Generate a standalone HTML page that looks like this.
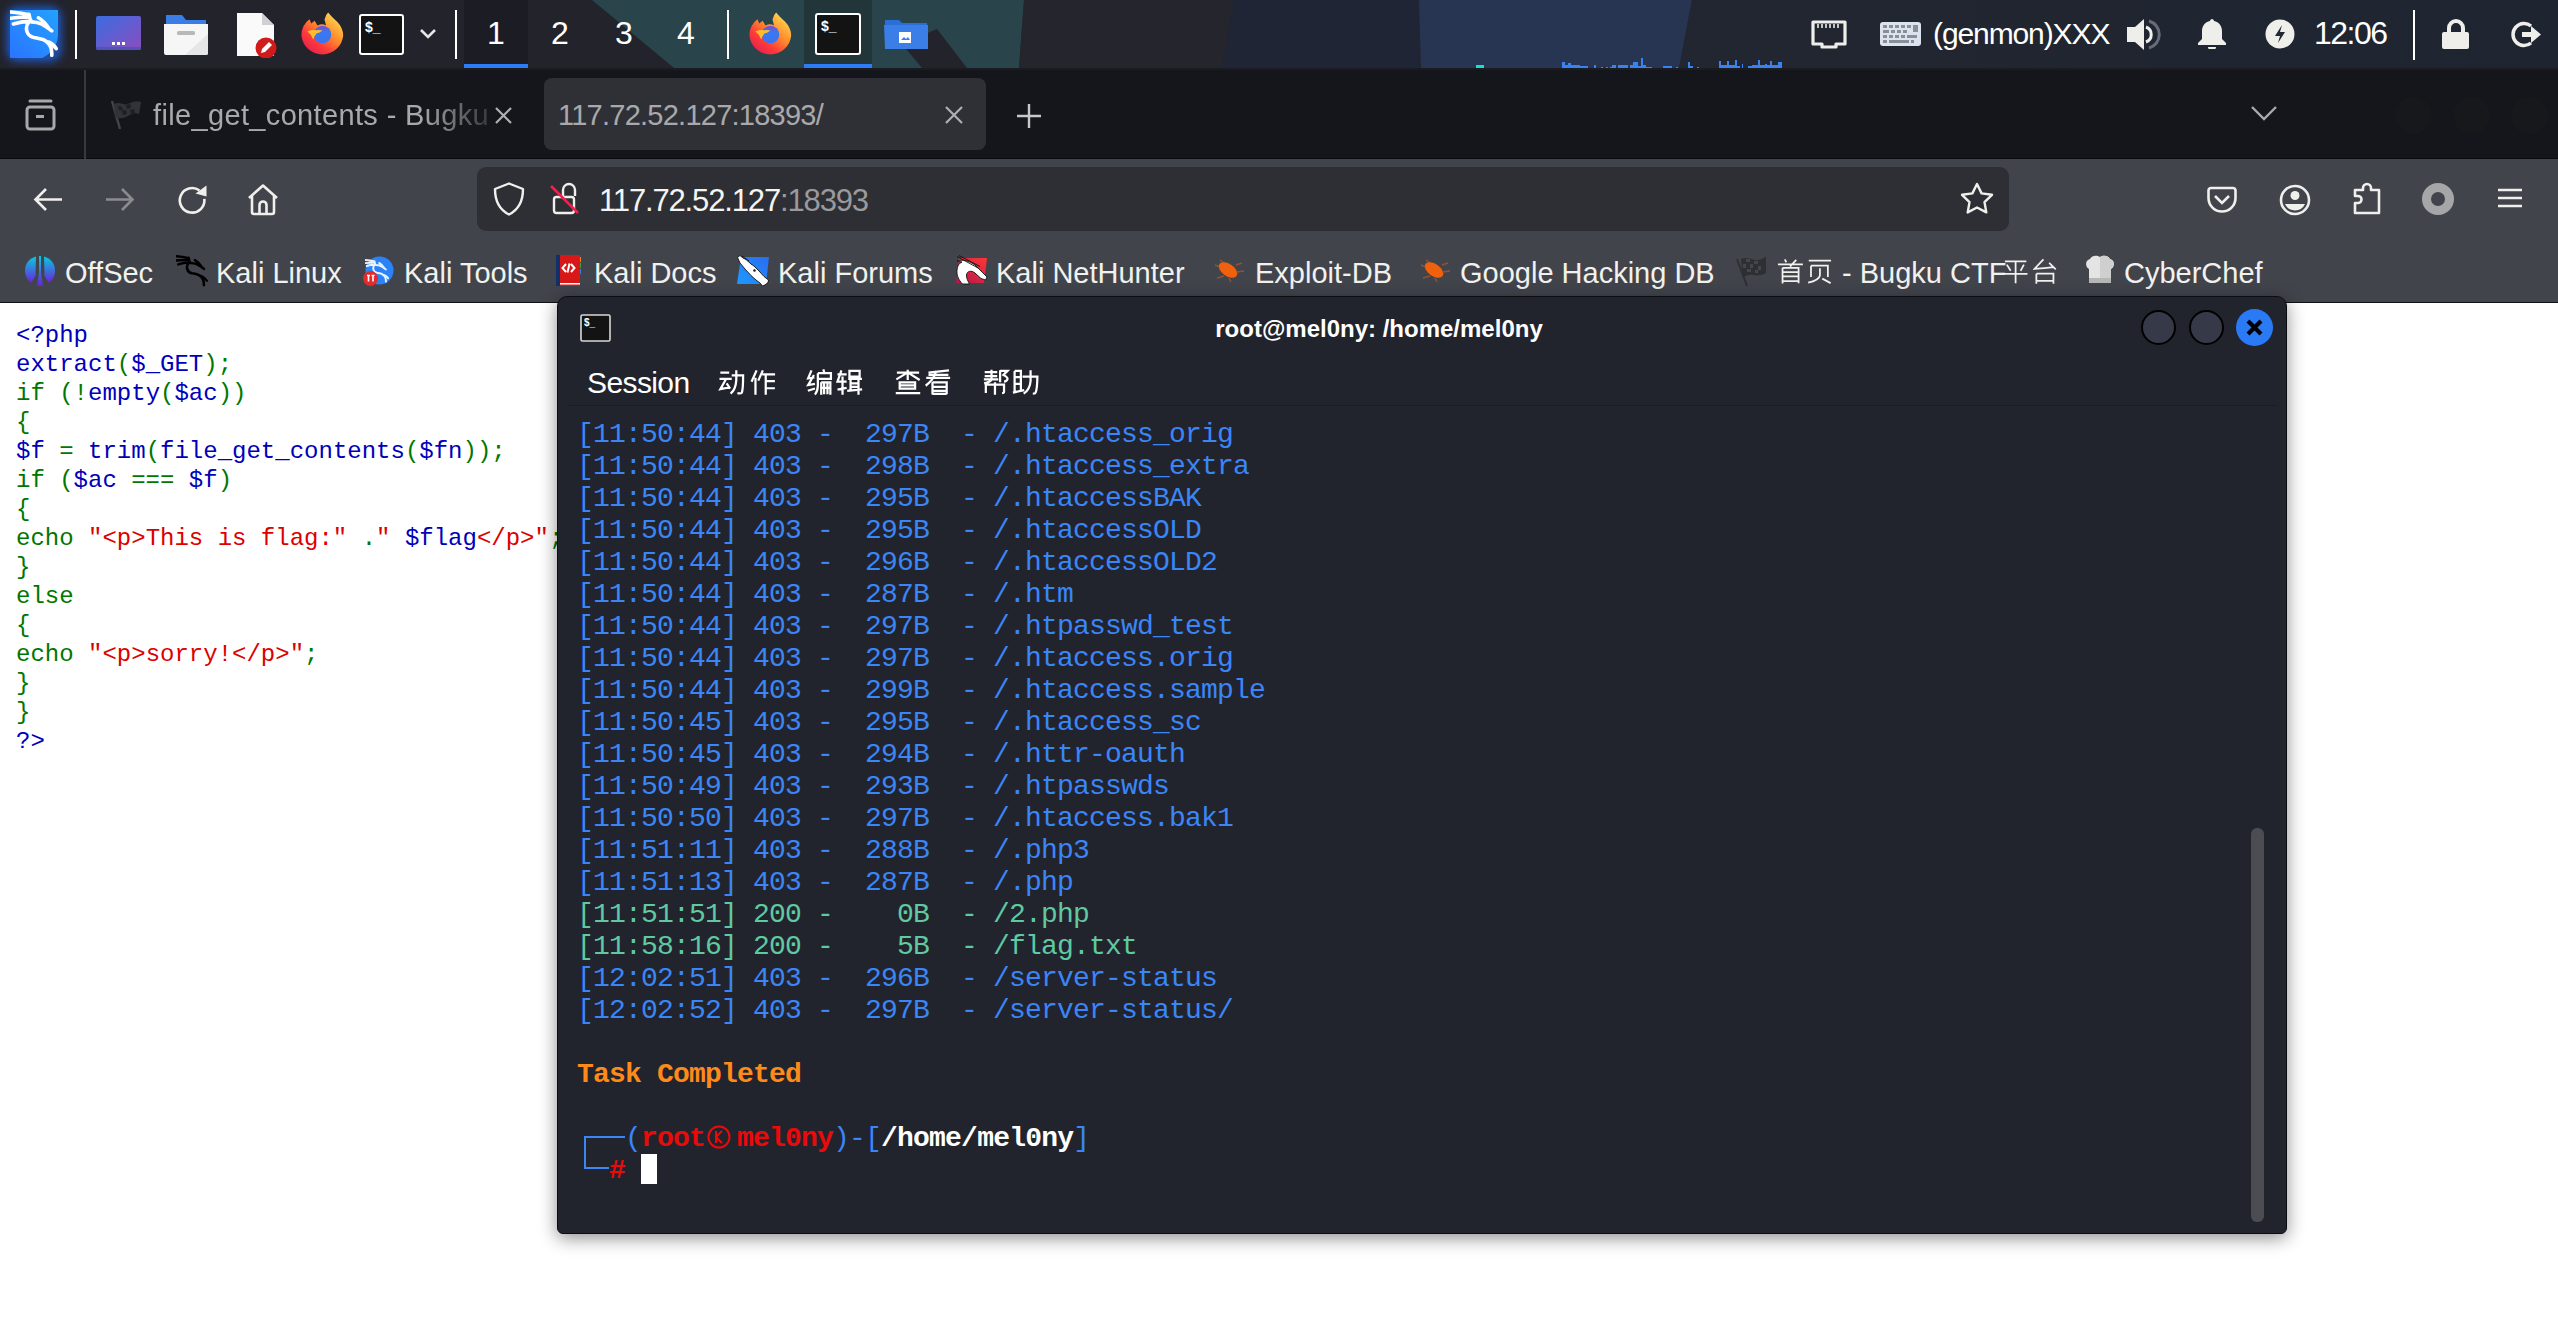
<!DOCTYPE html>
<html><head><meta charset="utf-8">
<style>
*{margin:0;padding:0;box-sizing:border-box}
html,body{width:2558px;height:1344px;overflow:hidden;background:#fff;font-family:"Liberation Sans",sans-serif}
.abs{position:absolute}
#panel{position:absolute;left:0;top:0;width:2558px;height:68px;background:#23242c;overflow:hidden}
#tabs{position:absolute;left:0;top:68px;width:2558px;height:91px;background:#15161b;border-top:2px solid #1b1c21;border-bottom:1px solid #0b0b0e}
#nav{position:absolute;left:0;top:159px;width:2558px;height:144px;background:#42444c;border-bottom:1px solid #101114}
#page{position:absolute;left:0;top:303px;width:2558px;height:1041px;background:#fff}
.php{position:absolute;left:16px;top:18px;font-family:"Liberation Mono",monospace;font-size:24px;line-height:29px;white-space:pre;color:#007700}
.g{color:#007700}.b{color:#0000BB}.r{color:#DD0000}
#term{position:absolute;left:557px;top:296px;width:1730px;height:938px;background:#22242d;border:1px solid #0c0d10;border-radius:10px 10px 6px 6px;box-shadow:0 4px 18px rgba(0,0,0,.45)}
.tl{position:absolute;left:19px;font-family:"Liberation Mono",monospace;font-size:28px;letter-spacing:-0.8px;line-height:32px;white-space:pre;color:#3b86f7}
.gr{color:#5fc9a2}.or{color:#fe8a19}.rd{color:#ea0a0a}.wh{color:#fff}.bl{color:#3b86f7}
.ui{font-family:"Liberation Sans",sans-serif}
.bm{top:94px;font-size:29px;line-height:40px;color:#f1f1ee;white-space:pre}
</style></head><body>
<svg width="0" height="0" style="position:absolute"><defs><symbol id="c-shou" viewBox="-1 -1 30 30"><path d="M8.4 1.6L10.1 4.6M20.7 2L14 9.3M1.1 6.8H27.8M6 10.6H23.2V27M6 10.6V27.4M6 15.3H23.2M6 19.8H23.2M6 24.8H23.2" fill="none" stroke="currentColor"/></symbol><symbol id="c-ye" viewBox="-1 -1 30 30"><path d="M3.1 2.9H26.9M5.4 8.3H23.5V20.5M5.4 8.3V20.5M15 11V18.8Q14 24 2.4 26.5M17.5 22.2L26.5 27" fill="none" stroke="currentColor"/></symbol><symbol id="c-ping" viewBox="-1 -1 30 30"><path d="M1 3.7H24M3.1 7.2L7.2 13.8M21.4 7.2L17.8 13.8M-0.5 17.1H25.2M12.5 3.7V27" fill="none" stroke="currentColor"/></symbol><symbol id="c-tai" viewBox="-1 -1 30 30"><path d="M10.2 1.6L0.5 11.8Q11 11 21.4 9.8M16.3 5.2L23.4 12.3M2.6 16.9H20.9V27.6M2.6 16.9V27.6M2.6 24.5H20.9" fill="none" stroke="currentColor"/></symbol><symbol id="c-dong" viewBox="-1 -1 30 30"><path d="M1.5 3.9H11M0.6 10.6H13.7M7.5 11L1.5 21.6L12 19.6M8.2 15.5L12 21M13.7 7H25.9Q25.9 22 24.5 25.5Q23.5 26.5 19.8 25.9M18.6 1.5V12Q18 22 12.5 26.5" fill="none" stroke="currentColor"/></symbol><symbol id="c-zuo" viewBox="-1 -1 30 30"><path d="M8.2 1.5L2.8 13.7M7 9.4V27.7M14.9 1.5L10 12.5M14.3 5.8H28M18 5.8V27.7M18 13.1H27.8M18 20.7H27.8" fill="none" stroke="currentColor"/></symbol><symbol id="c-bian" viewBox="-1 -1 30 30"><path d="M4.9 1.5L1.3 10L8 9M7.5 6.5L1.3 17.3L8.6 16M1 23.4L8.6 21M17.5 0.5L18.5 3.5M11.7 4.5H25.7V10.6H11.7M11.7 4.5V18Q11.5 24 8.6 27.5M15.3 14.3H25.1V27.7M15.3 14.3V27.7M18.4 14.3V27M22 14.3V27M15.3 20.4H25.1" fill="none" stroke="currentColor"/></symbol><symbol id="c-ji" viewBox="-1 -1 30 30"><path d="M0.6 5.8H10.4M4.8 1.5L0.6 13.7H10.4M6 8.2V27.7M0.6 22.2L10.4 20.4M13.4 2.1H24.3V8.2H13.4ZM12.1 10.6H26.8M14.6 10.6V24M23.1 10.6V27.7M14.6 15.5H23.1M14.6 19.2H23.1M11 23.5L27 21.8" fill="none" stroke="currentColor"/></symbol><symbol id="c-cha" viewBox="-1 -1 30 30"><path d="M2.1 3.9H25.9M13.7 0.9V11.9M12.5 4.5L1.5 11.2M14.9 4.5L26.5 11.9M5.1 14.3H21.6V21H5.1ZM5.1 17.6H21.6M0.9 25.9H27.1" fill="none" stroke="currentColor"/></symbol><symbol id="c-kan" viewBox="-1 -1 30 30"><path d="M25.8 1.5L3.8 3.9M3.8 6.4H25.1M1.4 9.7H27M12.3 2.1Q9 12 0.8 18M8.1 14.3H23.3V27.1M8.1 14.3V27.5M8.1 19.2H23.3M8.1 23.4H23.3M8.1 26.8H23.3" fill="none" stroke="currentColor"/></symbol><symbol id="c-bang" viewBox="-1 -1 30 30"><path d="M1.9 3.3H15.3M1.9 7.6H15.3M1 11.2H16.5M9.2 0.9V11.2Q8.5 14 1.3 15.5M18.4 1.5V14.3M18.4 2.1H26.3L22 6.4Q27 9 26.3 11Q25.5 13.5 22.6 13.7M3.1 16.7H22.6V24.5Q22.6 25.9 20.5 25.9M3.1 16.7V25.9M12.9 14.3V27.7" fill="none" stroke="currentColor"/></symbol><symbol id="c-zhu" viewBox="-1 -1 30 30"><path d="M1.8 2.1H8.5V23.5M1.8 2.1V24M1.8 8.8H8.5M1.8 16.1H8.5M0 25.3L12.1 22.8M10.3 8.2H26.2Q26 22 24.3 25.3Q23.5 26.5 21.3 26.5M18.9 1.5V13Q18.2 22 11.5 26.5" fill="none" stroke="currentColor"/></symbol>
<linearGradient id="osg" x1="0" y1="0" x2="0" y2="1"><stop offset="0" stop-color="#08c8e0"/><stop offset="1" stop-color="#6a22d8"/></linearGradient>
<linearGradient id="kfg" x1="0" y1="1" x2="1" y2="0"><stop offset="0" stop-color="#1e9bff"/><stop offset="1" stop-color="#2a6cf0"/></linearGradient>
<linearGradient id="nhg" x1="0" y1="1" x2="1" y2="0"><stop offset="0" stop-color="#b01850"/><stop offset="1" stop-color="#ff3535"/></linearGradient>
<symbol id="dragon" viewBox="0 0 48 48"><path d="M0.7 2Q10 2.5 19 4.7M0.7 8.3Q10 7 19 7M3.4 14Q11 11.5 19 11.4M19 4.3Q19.5 9 21.7 11.9Q27 12 31.9 14.1Q37 17 41.8 20.8M28.4 7.8Q34 11 38.6 18M19 11.9Q15.5 16 16.8 20.8Q18 26 24 27.5Q29 28.3 33 29.5Q39 32 41 38Q42 42 41.8 45.3M38.6 32Q44 34.5 46.2 38.6" fill="none" stroke="currentColor" stroke-width="3.8" stroke-linecap="round"/></symbol>
<symbol id="bug" viewBox="0 0 32 26"><g filter="url(#blr)"><ellipse cx="15" cy="13" rx="10.5" ry="6" transform="rotate(35 15 13)" fill="#f0600f"/><path d="M7 3L11 6M2 8L7 10M24 15L31 14M4 21L11 19M16 21L18 25M23 8L29 6" stroke="#e8661a" stroke-width="1.5" opacity=".45"/></g></symbol><filter id="blr" x="-20%" y="-20%" width="140%" height="140%"><feGaussianBlur stdDeviation="0.55"/></filter>
</defs></svg>
<div id="panel">
<svg class="abs" style="left:0;top:0" width="2558" height="68" viewBox="0 0 2558 68">
<defs>
<linearGradient id="rg" x1="0" x2="1" y1="0" y2="0"><stop offset="0" stop-color="#222630"/><stop offset="1" stop-color="#1e2531"/></linearGradient>
<linearGradient id="pg" x1="0" y1="0" x2="1" y2="1"><stop offset="0" stop-color="#3a6de0"/><stop offset="1" stop-color="#8a4dbf"/></linearGradient>
<linearGradient id="ffo" x1="0.15" y1="0.95" x2="0.85" y2="0.1"><stop offset="0" stop-color="#e0204f"/><stop offset="0.3" stop-color="#ff3a3a"/><stop offset="0.6" stop-color="#ff8a2a"/><stop offset="1" stop-color="#ffd54e"/></linearGradient><linearGradient id="ffb" x1="0" y1="0" x2="0" y2="1"><stop offset="0" stop-color="#7a4ad0"/><stop offset="0.35" stop-color="#3a78f2"/><stop offset="1" stop-color="#3a74ee"/></linearGradient>
</defs>
<rect width="2558" height="68" fill="#23232b"/>
<polygon points="592,0 1024,0 1019,68 674,68" fill="#29444a"/>
<polygon points="937,29 967,68 922,68 902,44" fill="#23232b"/>
<polygon points="1024,0 1234,0 1222,68 1019,68" fill="#25252e"/>
<polygon points="1234,0 1419,0 1421,68 1222,68" fill="#1f2535"/>
<polygon points="1419,0 1692,0 1679,68 1421,68" fill="#283552"/>
<polygon points="1692,0 2558,0 2558,68 1679,68" fill="url(#rg)"/>
<rect x="464" y="0" width="64" height="68" fill="#1c1d24"/>
<rect x="464" y="64" width="64" height="4" fill="#2e7bf6"/>
<rect x="804" y="0" width="68" height="68" fill="#223538"/>
<rect x="804" y="64" width="68" height="4" fill="#2e7bf6"/>
<rect x="1476" y="65" width="8" height="3" fill="#17e0d0"/>
<g fill="#3a82f2"><rect x="1562" y="62" width="3" height="6"/><rect x="1565" y="65" width="3" height="3"/><rect x="1568" y="63" width="3" height="5"/><rect x="1571" y="65" width="9" height="3"/><rect x="1580" y="66" width="8" height="2"/><rect x="1594" y="65" width="2" height="3"/><rect x="1601" y="67" width="2" height="1"/><rect x="1606" y="67" width="2" height="1"/><rect x="1610" y="67" width="2" height="1"/><rect x="1612" y="65" width="4" height="3"/><rect x="1618" y="65" width="10" height="3"/><rect x="1630" y="65" width="3" height="3"/><rect x="1633" y="62" width="5" height="6"/><rect x="1638" y="66" width="3" height="2"/><rect x="1641" y="58" width="2" height="10"/><rect x="1643" y="65" width="3" height="3"/><rect x="1646" y="67" width="4" height="1"/><rect x="1650" y="67" width="2" height="1"/><rect x="1663" y="66" width="9" height="2"/><rect x="1676" y="67" width="2" height="1"/><rect x="1688" y="62" width="2" height="6"/><rect x="1690" y="66" width="3" height="2"/><rect x="1697" y="67" width="2" height="1"/><rect x="1719" y="61" width="2" height="7"/><rect x="1721" y="65" width="6" height="3"/><rect x="1727" y="61" width="2" height="7"/><rect x="1729" y="65" width="6" height="3"/><rect x="1735" y="60" width="2" height="8"/><rect x="1737" y="66" width="3" height="2"/><rect x="1742" y="64" width="1" height="4"/><rect x="1748" y="66" width="4" height="2"/><rect x="1752" y="65" width="6" height="3"/><rect x="1758" y="60" width="2" height="8"/><rect x="1760" y="65" width="5" height="3"/><rect x="1765" y="64" width="2" height="4"/><rect x="1767" y="65" width="3" height="3"/><rect x="1770" y="61" width="2" height="7"/><rect x="1772" y="65" width="6" height="3"/><rect x="1778" y="62" width="4" height="6"/></g>
</svg>
<!-- kali menu icon -->
<div class="abs" style="left:11px;top:11px;width:46px;height:46px;border-radius:6px;background:rgba(30,110,255,.55);box-shadow:0 0 9px 4px rgba(30,110,255,.75)"></div>
<svg class="abs" style="left:10px;top:10px" width="48" height="48" viewBox="0 0 48 48"><defs><linearGradient id="kg" x1="0" y1="1" x2="1" y2="0"><stop offset="0" stop-color="#2a74ff"/><stop offset="1" stop-color="#22a2ff"/></linearGradient></defs>
<path d="M0 0H48V26Q46 42 32 48H0Z" fill="url(#kg)"/>
<path d="M0.7 2Q10 2.5 19 4.7M0.7 8.3Q10 7 19 7M3.4 14Q11 11.5 19 11.4M19 4.3Q19.5 9 21.7 11.9Q27 12 31.9 14.1Q37 17 41.8 20.8M28.4 7.8Q34 11 38.6 18M19 11.9Q15.5 16 16.8 20.8Q18 26 24 27.5Q29 28.3 33 29.5Q39 32 41 38Q42 42 41.8 45.3M38.6 32Q44 34.5 46.2 38.6" stroke="#fff" stroke-width="3.6" fill="none" stroke-linecap="round"/></svg>
<div class="abs" style="left:75px;top:10px;width:2px;height:49px;background:#fff"></div>
<svg class="abs" style="left:96px;top:16px" width="45" height="35" viewBox="0 0 45 35"><rect width="45" height="34" rx="2" fill="url(#pg)"/><rect y="31" width="45" height="3" fill="#3d4fb5" opacity=".6"/><rect x="16" y="26" width="3" height="3" fill="#fff"/><rect x="21" y="26" width="3" height="3" fill="#fff"/><rect x="26" y="26" width="3" height="3" fill="#fff"/></svg>
<svg class="abs" style="left:163px;top:14px" width="46" height="41" viewBox="0 0 46 41"><path d="M3 1h16l4 5h20v8H3z" fill="#3b7de6"/><path d="M1 10h44v29a2 2 0 0 1-2 2H3a2 2 0 0 1-2-2z" fill="#f6f6f6"/><path d="M45 20V39a2 2 0 0 1-2 2H22z" fill="#e6e6e6"/><rect x="14" y="17" width="18" height="4" rx="1.5" fill="#b8b8b8"/></svg>
<svg class="abs" style="left:236px;top:12px" width="44" height="46" viewBox="0 0 44 46"><path d="M1 1h25l12 12v31H1z" fill="#fafafa"/><path d="M26 1v12h12z" fill="#d0d0d0"/><circle cx="30" cy="36" r="10.5" fill="#d11a1a"/><path d="M25 41l1-4 7-7 3 3-7 7z" fill="#fff"/></svg>
<svg class="abs" style="left:300px;top:12px" width="44" height="44" viewBox="0 0 44 44"><path d="M9.5 7.2L11.2 11.5L14.6 8.8L17.5 13.5Q22 11 26 13.5L24.5 7.5Q25.5 3 28.1 0.6Q31.5 5 37.4 9.9Q43.2 16 43.2 23.5A21 21 0 0 1 1.4 23.5Q1.4 13 9.5 7.2Z" fill="url(#ffo)"/><circle cx="22.5" cy="22.5" r="8.8" fill="url(#ffb)"/><path d="M7.3 19.3Q12 17.3 16.5 18.2Q20 17.8 22.5 18.6Q19.5 21 16.5 21.6Q14.2 24 13.2 27.5Q11.5 22.5 7.3 19.3Z" fill="#ffbd2e"/></svg>
<svg class="abs" style="left:359px;top:14px" width="45" height="41" viewBox="0 0 45 41"><rect x="1" y="1" width="43" height="39" rx="2" fill="#131313" stroke="#fff" stroke-width="2"/><text x="6" y="18" font-family="Liberation Sans" font-weight="bold" font-size="14" fill="#fff">$_</text></svg>
<svg class="abs" style="left:419px;top:28px" width="18" height="12" viewBox="0 0 18 12"><path d="M2 2l7 7 7-7" stroke="#e6e6e6" stroke-width="2.6" fill="none"/></svg>
<div class="abs" style="left:455px;top:10px;width:2px;height:49px;background:#fff"></div>
<div class="abs ui" style="left:464px;top:13px;width:64px;text-align:center;font-size:32px;line-height:40px;color:#fff">1</div>
<div class="abs ui" style="left:528px;top:13px;width:64px;text-align:center;font-size:32px;line-height:40px;color:#fff">2</div>
<div class="abs ui" style="left:592px;top:13px;width:64px;text-align:center;font-size:32px;line-height:40px;color:#fff">3</div>
<div class="abs ui" style="left:654px;top:13px;width:64px;text-align:center;font-size:32px;line-height:40px;color:#fff">4</div>
<div class="abs" style="left:727px;top:10px;width:2px;height:49px;background:#fff"></div>
<svg class="abs" style="left:748px;top:12px" width="44" height="44" viewBox="0 0 44 44"><path d="M9.5 7.2L11.2 11.5L14.6 8.8L17.5 13.5Q22 11 26 13.5L24.5 7.5Q25.5 3 28.1 0.6Q31.5 5 37.4 9.9Q43.2 16 43.2 23.5A21 21 0 0 1 1.4 23.5Q1.4 13 9.5 7.2Z" fill="url(#ffo)"/><circle cx="22.5" cy="22.5" r="8.8" fill="url(#ffb)"/><path d="M7.3 19.3Q12 17.3 16.5 18.2Q20 17.8 22.5 18.6Q19.5 21 16.5 21.6Q14.2 24 13.2 27.5Q11.5 22.5 7.3 19.3Z" fill="#ffbd2e"/></svg>
<svg class="abs" style="left:815px;top:13px" width="46" height="42" viewBox="0 0 46 42"><rect x="1" y="1" width="44" height="40" rx="2" fill="#131313" stroke="#fff" stroke-width="2"/><text x="6" y="18" font-family="Liberation Sans" font-weight="bold" font-size="14" fill="#fff">$_</text></svg>
<svg class="abs" style="left:884px;top:18px" width="44" height="32" viewBox="0 0 44 32"><path d="M1 2h14l3 3h25v6H1z" fill="#2a6fd8"/><path d="M0 7h44v24H1z" fill="#3b7ee8"/><rect x="15" y="14" width="12" height="11" fill="#fff"/><path d="M17 22l3-3 2 2 2-2 2 3z" fill="#3b7ee8"/></svg>
<svg class="abs" style="left:1811px;top:20px" width="36" height="29" viewBox="0 0 36 29"><path d="M2 2h32v22H25v3H11v-3H2z" stroke="#eeeeea" stroke-width="3.2" fill="none" stroke-linejoin="round"/><path d="M7 4v4M11 4v4M15 4v4M19 4v4M23 4v4M27 4v4" stroke="#eeeeea" stroke-width="1.6"/></svg>
<svg class="abs" style="left:1880px;top:22px" width="41" height="24" viewBox="0 0 41 24"><rect width="41" height="24" rx="3" fill="#dde3ee"/><g fill="#8a8e96"><rect x="3" y="3" width="4" height="3"/><rect x="9" y="3" width="4" height="3"/><rect x="15" y="3" width="4" height="3"/><rect x="21" y="3" width="4" height="3"/><rect x="27" y="3" width="4" height="3"/><rect x="33" y="3" width="5" height="7"/><rect x="3" y="8" width="6" height="3"/><rect x="11" y="8" width="4" height="3"/><rect x="17" y="8" width="4" height="3"/><rect x="23" y="8" width="4" height="3"/><rect x="3" y="13" width="4" height="3"/><rect x="9" y="13" width="4" height="3"/><rect x="15" y="13" width="4" height="3"/><rect x="21" y="13" width="4" height="3"/><rect x="27" y="13" width="10" height="3"/><rect x="3" y="18" width="4" height="3"/><rect x="9" y="18" width="20" height="3"/><rect x="31" y="18" width="3" height="3"/></g></svg>
<div class="abs ui" style="left:1933px;top:14px;font-size:30px;line-height:40px;color:#fff;white-space:pre;letter-spacing:-1.1px">(genmon)XXX</div>
<svg class="abs" style="left:2126px;top:18px" width="35" height="33" viewBox="0 0 35 33"><path d="M1 9h8l9-8v31l-9-8H1z" fill="#eeeeea"/><path d="M20 9a8 8 0 0 1 0 15" stroke="#eeeeea" stroke-width="3" fill="none"/><path d="M23 3a14 14 0 0 1 0 27" stroke="#666c75" stroke-width="3" fill="none"/></svg>
<svg class="abs" style="left:2197px;top:18px" width="30" height="31" viewBox="0 0 30 31"><path d="M15 1c1 0 2 1 2 2 5 1 8 5 8 10v8l4 4v2H1v-2l4-4v-8c0-5 3-9 8-10 0-1 1-2 2-2z" fill="#eeeeea"/><path d="M11 29h8a4 3 0 0 1-8 0z" fill="#eeeeea"/></svg>
<svg class="abs" style="left:2265px;top:19px" width="30" height="30" viewBox="0 0 30 30"><circle cx="15" cy="15" r="14.5" fill="#eeeeea"/><path d="M17 6l-7 11h5l-2 7 7-11h-5z" fill="#222732"/></svg>
<div class="abs ui" style="left:2314px;top:13px;font-size:32px;line-height:40px;color:#fff;white-space:pre;letter-spacing:-1.5px">12:06</div>
<div class="abs" style="left:2413px;top:10px;width:2px;height:50px;background:#fff"></div>
<svg class="abs" style="left:2442px;top:19px" width="28" height="30" viewBox="0 0 28 30"><path d="M7 13V9a7 7 0 0 1 14 0v4" stroke="#eeeeea" stroke-width="4" fill="none"/><rect x="0" y="13" width="27" height="17" rx="2" fill="#eeeeea"/></svg>
<svg class="abs" style="left:2511px;top:21px" width="31" height="27" viewBox="0 0 31 27"><path d="M20 5A11 11 0 1 0 20 22" stroke="#eeeeea" stroke-width="3.5" fill="none"/><path d="M11 11h9V5l10 8.5-10 8.5v-6h-9z" fill="#eeeeea"/></svg>
</div>
<div id="tabs">
<svg class="abs" style="left:24px;top:28px" width="33" height="34" viewBox="0 0 33 34"><path d="M6 3h21M3 12a3 3 0 0 1 3-3h21a3 3 0 0 1 3 3v16a3 3 0 0 1-3 3H6a3 3 0 0 1-3-3z" stroke="#a8a8ab" stroke-width="3" fill="none" stroke-linecap="round"/><rect x="12" y="17" width="8" height="3" fill="#a8a8ab"/></svg>
<div class="abs" style="left:84px;top:0;width:2px;height:90px;background:#38393e"></div>
<svg class="abs" style="left:110px;top:28px" width="34" height="34" viewBox="0 0 34 34" opacity=".55"><path d="M2 3l8 28" stroke="#6a6a70" stroke-width="2.4"/><path d="M4 6c6-3 10 2 14 0s8-4 13-2l-2 12c-5-2-9 1-13 3s-8 0-11 2z" fill="#4a4a50"/><path d="M8 8l4 1 1 4-4-1zM16 7l4-1 1 4-4 1zM12 13l4-1 1 4-4 1zM20 12l4-1 1 4-4 1z" fill="#26262b"/></svg>
<div class="abs ui" style="left:153px;top:20px;width:335px;overflow:hidden;font-size:29px;line-height:50px;color:#a9a9ac;white-space:pre;letter-spacing:0.35px;-webkit-mask-image:linear-gradient(90deg,#000 80%,rgba(0,0,0,.25) 100%)">file_get_contents - Bugku</div>
<svg class="abs" style="left:495px;top:37px" width="17" height="17" viewBox="0 0 17 17"><path d="M1 1l15 15M16 1L1 16" stroke="#b0b0b3" stroke-width="2.2"/></svg>
<div class="abs" style="left:544px;top:8px;width:442px;height:72px;border-radius:8px;background:#2f3036"></div>
<div class="abs ui" style="left:558px;top:20px;font-size:29px;line-height:50px;color:#a9a9ac;white-space:pre;letter-spacing:-0.75px">117.72.52.127:18393/</div>
<svg class="abs" style="left:945px;top:36px" width="18" height="18" viewBox="0 0 18 18"><path d="M1 1l16 16M17 1L1 17" stroke="#b0b0b3" stroke-width="2.2"/></svg>
<svg class="abs" style="left:1016px;top:33px" width="26" height="26" viewBox="0 0 26 26"><path d="M13 1v24M1 13h24" stroke="#c8c8cb" stroke-width="2.4"/></svg>
<svg class="abs" style="left:2250px;top:35px" width="28" height="16" viewBox="0 0 28 16"><path d="M2 2l12 12L26 2" stroke="#a9a9ac" stroke-width="2.4" fill="none"/></svg>
<div class="abs" style="left:2395px;top:27px;width:37px;height:37px;border-radius:50%;background:#17181c"></div>
<div class="abs" style="left:2453px;top:27px;width:37px;height:37px;border-radius:50%;background:#17181c"></div>
<div class="abs" style="left:2511px;top:27px;width:37px;height:37px;border-radius:50%;background:#17181c"></div>
</div>
<div id="nav">
<svg class="abs" style="left:33px;top:28px" width="30" height="26" viewBox="0 0 30 26"><path d="M29 12.5H3M13 2L2.5 12.5 13 23" stroke="#efefec" stroke-width="2.6" fill="none"/></svg>
<svg class="abs" style="left:105px;top:28px" width="30" height="26" viewBox="0 0 30 26"><path d="M1 12.5h26M17 2l10.5 10.5L17 23" stroke="#8b8c90" stroke-width="2.6" fill="none"/></svg>
<svg class="abs" style="left:177px;top:25px" width="32" height="32" viewBox="0 0 32 32"><path d="M27.3 14.8A12.3 12.3 0 1 1 22.5 6.5" stroke="#efefec" stroke-width="2.6" fill="none"/><path d="M18.5 9.5L29.5 1.5V12.5Z" fill="#efefec"/></svg>
<svg class="abs" style="left:247px;top:25px" width="32" height="32" viewBox="0 0 32 32"><path d="M2 14L16 1.5 30 14M5 12v16a2 2 0 0 0 2 2h18a2 2 0 0 0 2-2V12M12.5 30v-9a3.5 3.5 0 0 1 7 0v9" stroke="#efefec" stroke-width="2.6" fill="none" stroke-linejoin="round"/></svg>
<div class="abs" style="left:477px;top:8px;width:1532px;height:64px;border-radius:9px;background:#2e2f34"></div>
<svg class="abs" style="left:493px;top:23px" width="32" height="34" viewBox="0 0 32 34"><path d="M16 1.5L30 7c0 13-5 21-14 25.5C7 28 2 20 2 7z" stroke="#efefec" stroke-width="2.4" fill="none" stroke-linejoin="round"/></svg>
<svg class="abs" style="left:550px;top:22px" width="32" height="35" viewBox="0 0 32 35"><path d="M13 15V9a6 6 0 0 1 12 0v6" stroke="#efefec" stroke-width="2.4" fill="none"/><rect x="4" y="16" width="20" height="16" rx="2.5" stroke="#efefec" stroke-width="2.4" fill="none"/><path d="M1 5l27 27" stroke="#ef1f4e" stroke-width="2.6"/></svg>
<div class="abs ui" style="left:599px;top:22px;font-size:31px;line-height:40px;color:#f4f4f2;white-space:pre;letter-spacing:-1.15px">117.72.52.127<span style="color:#9a9a9e">:18393</span></div>
<svg class="abs" style="left:1960px;top:23px" width="34" height="33" viewBox="0 0 34 33"><path d="M17 2l4.6 9.4 10.4 1.4-7.5 7.3 1.8 10.3L17 25.5l-9.3 4.9 1.8-10.3L2 12.8l10.4-1.4z" stroke="#efefec" stroke-width="2.4" fill="none" stroke-linejoin="round"/></svg>
<svg class="abs" style="left:2207px;top:27px" width="30" height="28" viewBox="0 0 30 28"><path d="M4 2h22a2.5 2.5 0 0 1 2.5 2.5V12A13.5 13.5 0 0 1 1.5 12V4.5A2.5 2.5 0 0 1 4 2z" stroke="#efefec" stroke-width="2.6" fill="none"/><path d="M8 10l7 7 7-7" stroke="#efefec" stroke-width="2.6" fill="none"/></svg>
<svg class="abs" style="left:2279px;top:25px" width="32" height="32" viewBox="0 0 32 32"><circle cx="16" cy="16" r="14" stroke="#efefec" stroke-width="2.6" fill="none"/><circle cx="16" cy="11.5" r="4.5" fill="#efefec"/><path d="M6 20h20a11 11 0 0 1-20 0z" fill="#efefec"/></svg>
<svg class="abs" style="left:2352px;top:23px" width="30" height="34" viewBox="0 0 30 34"><path d="M3 31V21h3a3.5 3.5 0 0 0 0-7H3V8h8V6a4 4 0 0 1 8 0v2h8v23z" stroke="#efefec" stroke-width="2.6" fill="none" stroke-linejoin="round"/></svg>
<svg class="abs" style="left:2421px;top:23px" width="34" height="34" viewBox="0 0 34 34"><circle cx="17" cy="17" r="11.5" stroke="#a6a6a8" stroke-width="9" fill="none"/></svg>
<svg class="abs" style="left:2497px;top:29px" width="26" height="20" viewBox="0 0 26 20"><path d="M1 2h24M1 10h24M1 18h24" stroke="#efefec" stroke-width="2.6"/></svg>

<svg class="abs" style="left:25px;top:97px" width="30" height="30" viewBox="0 0 30 30"><path d="M11 0.5C4 2.5 0 8 0 14.5C0 20 2.5 24 6 27L10.5 20Z" fill="url(#osg)"/><path d="M19 0.5C26 2.5 30 8 30 14.5C30 20 27.5 24 24 27L19.5 20Z" fill="url(#osg)"/><path d="M14 0H16V17L18 30H12L14 17Z" fill="url(#osg)"/></svg>
<svg class="abs" style="left:176px;top:96px;color:#000" width="32" height="32"><use href="#dragon"/></svg>
<svg class="abs" style="left:363px;top:97px" width="32" height="32" viewBox="0 0 32 32"><circle cx="16.5" cy="14.5" r="14" fill="#2a84f8"/><g style="color:#fff" opacity=".9"><use href="#dragon" x="2" y="3" width="24" height="24"/></g><circle cx="7.5" cy="22.5" r="7.5" fill="#e52a2a"/><path d="M4 19.5h3M5.5 19.5v6M8.5 19.5h3M10 19.5v6" stroke="#fff" stroke-width="1.6"/></svg>
<svg class="abs" style="left:556px;top:96px" width="25" height="32" viewBox="0 0 25 32"><rect x="0" y="0" width="24" height="31" fill="#d81818"/><rect x="0" y="0" width="4" height="31" fill="#11306a"/><rect x="4" y="28" width="20" height="1.5" fill="#fff"/><rect x="24" y="2" width="1" height="5" fill="#f08a18"/><rect x="24" y="8" width="1" height="5" fill="#3aaa3a"/><rect x="24" y="14" width="1" height="5" fill="#3a7af0"/><path d="M10 9L6.5 13L10 17M15 9L18.5 13L15 17M13.5 8.5L11.5 17.5" stroke="#fff" stroke-width="2" fill="none"/></svg>
<svg class="abs" style="left:737px;top:96px" width="32" height="32" viewBox="0 0 32 32"><path d="M4 2H32L29 29H0Z" fill="url(#kfg)"/><path d="M0.5 2.5L3 0.5L6 3L9 4.5L14 9L17 11L22 16L27 21.5L31.5 25L31 27.5L28 30L25.5 31L23 28L19 25L14 20.5L8 14L3 8Z" fill="#fff" stroke="#111" stroke-width="0.9" stroke-linejoin="round"/><path d="M5 1L12 6" stroke="#111" stroke-width="0.9"/><circle cx="17.5" cy="15.5" r="1.2" fill="#111"/></svg>
<svg class="abs" style="left:956px;top:96px" width="32" height="32" viewBox="0 0 32 32"><path d="M3 3H31L28 28H0Z" fill="url(#nhg)"/><path d="M1 6C7 4 13 6 19 10L26 17L31 22L29.5 25L25 23.5L19 18C15 15 11 16 10.5 20C10.2 23 12 26 13.5 29L6.5 29C2.5 25 0.5 20 1 15C1.3 11 3 8 6 7Z" fill="#fff" stroke="#111" stroke-width="0.9" stroke-linejoin="round"/><path d="M1 1.5L22 13M3 0.5L24 11.5" stroke="#111" stroke-width="0.9"/></svg>
<svg class="abs" style="left:1213px;top:98px" width="32" height="26"><use href="#bug"/></svg>
<svg class="abs" style="left:1419px;top:98px" width="32" height="26"><use href="#bug"/></svg>
<svg class="abs" style="left:1736px;top:96px" width="32" height="32" viewBox="0 0 32 32"><path d="M1 4L11 31" stroke="#2e2f33" stroke-width="2"/><path d="M5 4C12 1 17 6 22 5C26 4.5 28 2.5 30 1.5V18C26 20 22 21 17 20C12 19 9 21 7 23L5 4Z" fill="#2e2f33"/><g fill="#45464d"><rect x="10" y="4" width="4" height="3"/><rect x="18" y="6" width="4" height="3"/><rect x="7" y="9" width="3" height="4"/><rect x="14" y="9" width="3" height="4"/><rect x="22" y="11" width="3" height="4"/><rect x="11" y="14" width="4" height="3"/><rect x="19" y="15" width="3" height="3"/></g></svg>
<svg class="abs" style="left:2085px;top:96px" width="30" height="30" viewBox="0 0 30 30"><path d="M4 14C0 12 0 5 5 4C7 0 12 0 15 2C18 0 23 0 25 4C30 5 30 12 26 14V28H4Z" fill="#e4e4e4"/><path d="M15 2C18 0 23 0 25 4C30 5 30 12 26 14V28H15Z" fill="#cfcfcf"/><rect x="4" y="23" width="22" height="5" fill="#b6b6b6"/></svg>
<div class="abs ui bm" style="left:65px">OffSec</div>
<div class="abs ui bm" style="left:216px">Kali Linux</div>
<div class="abs ui bm" style="left:404px">Kali Tools</div>
<div class="abs ui bm" style="left:594px">Kali Docs</div>
<div class="abs ui bm" style="left:778px">Kali Forums</div>
<div class="abs ui bm" style="left:996px">Kali NetHunter</div>
<div class="abs ui bm" style="left:1255px">Exploit-DB</div>
<div class="abs ui bm" style="left:1460px">Google Hacking DB</div>
<svg class="abs" style="left:1776px;top:98px;color:#f1f1ee;stroke-width:1.9" width="28" height="28"><use href="#c-shou"/></svg><svg class="abs" style="left:1805px;top:98px;color:#f1f1ee;stroke-width:1.9" width="28" height="28"><use href="#c-ye"/></svg><div class="abs ui bm" style="left:1834px"> - Bugku CTF</div><svg class="abs" style="left:2003px;top:98px;color:#f1f1ee;stroke-width:1.9" width="28" height="28"><use href="#c-ping"/></svg><svg class="abs" style="left:2033px;top:98px;color:#f1f1ee;stroke-width:1.9" width="28" height="28"><use href="#c-tai"/></svg>
<div class="abs ui bm" style="left:2124px">CyberChef</div>
</div>
<div id="page">
<div class="php"><span class="b">&lt;?php
extract</span><span class="g">(</span><span class="b">$_GET</span><span class="g">);
if (!</span><span class="b">empty</span><span class="g">(</span><span class="b">$ac</span><span class="g">))
{
</span><span class="b">$f </span><span class="g">= </span><span class="b">trim</span><span class="g">(</span><span class="b">file_get_contents</span><span class="g">(</span><span class="b">$fn</span><span class="g">));
if (</span><span class="b">$ac </span><span class="g">=== </span><span class="b">$f</span><span class="g">)
{
echo </span><span class="r">"&lt;p&gt;This is flag:" </span><span class="g">.</span><span class="r">" </span><span class="b">$flag</span><span class="r">&lt;/p&gt;"</span><span class="g">;
}
else
{
echo </span><span class="r">"&lt;p&gt;sorry!&lt;/p&gt;"</span><span class="g">;
}
}
</span><span class="b">?&gt;</span></div>
</div>
<div id="term">
<svg class="abs" style="left:22px;top:17px" width="31" height="28" viewBox="0 0 31 28"><rect x="1" y="1" width="29" height="26" rx="1.5" fill="#131313" stroke="#d8d8d8" stroke-width="1.6"/><text x="4" y="12" font-family="Liberation Sans" font-weight="bold" font-size="10" fill="#fff">$_</text></svg>
<div class="abs ui" style="left:-44px;top:17px;width:1730px;text-align:center;font-size:24px;line-height:30px;font-weight:bold;color:#fff;white-space:pre">root@mel0ny: /home/mel0ny</div>
<div class="abs" style="left:1583px;top:13px;width:35px;height:35px;border-radius:50%;background:#363a48;border:2px solid #000"></div>
<div class="abs" style="left:1631px;top:13px;width:35px;height:35px;border-radius:50%;background:#363a48;border:2px solid #000"></div>
<div class="abs" style="left:1678px;top:12px;width:37px;height:37px;border-radius:50%;background:#2a7af5"></div>
<svg class="abs" style="left:1685px;top:19px" width="23" height="23" viewBox="0 0 23 23"><path d="M5 5l13 13M18 5L5 18" stroke="#000" stroke-width="4.2" stroke-linecap="butt"/></svg>
<div class="abs ui" style="left:29px;top:66px;font-size:30px;line-height:40px;color:#fff;white-space:pre;letter-spacing:-0.6px">Session</div><svg class="abs" style="left:160px;top:71px;color:#ffffff;stroke-width:2.4" width="28" height="28"><use href="#c-dong"/></svg><svg class="abs" style="left:190px;top:71px;color:#ffffff;stroke-width:2.4" width="28" height="28"><use href="#c-zuo"/></svg><svg class="abs" style="left:248px;top:71px;color:#ffffff;stroke-width:2.4" width="28" height="28"><use href="#c-bian"/></svg><svg class="abs" style="left:278px;top:71px;color:#ffffff;stroke-width:2.4" width="28" height="28"><use href="#c-ji"/></svg><svg class="abs" style="left:336px;top:71px;color:#ffffff;stroke-width:2.4" width="28" height="28"><use href="#c-cha"/></svg><svg class="abs" style="left:366px;top:71px;color:#ffffff;stroke-width:2.4" width="28" height="28"><use href="#c-kan"/></svg><svg class="abs" style="left:424px;top:71px;color:#ffffff;stroke-width:2.4" width="28" height="28"><use href="#c-bang"/></svg><svg class="abs" style="left:454px;top:71px;color:#ffffff;stroke-width:2.4" width="28" height="28"><use href="#c-zhu"/></svg>
<div class="abs" style="left:10px;top:108px;width:1710px;height:1px;background:#1b1d25"></div>
<div class="tl" style="top:122px">[11:50:44] 403 -  297B  - /.htaccess_orig
[11:50:44] 403 -  298B  - /.htaccess_extra
[11:50:44] 403 -  295B  - /.htaccessBAK
[11:50:44] 403 -  295B  - /.htaccessOLD
[11:50:44] 403 -  296B  - /.htaccessOLD2
[11:50:44] 403 -  287B  - /.htm
[11:50:44] 403 -  297B  - /.htpasswd_test
[11:50:44] 403 -  297B  - /.htaccess.orig
[11:50:44] 403 -  299B  - /.htaccess.sample
[11:50:45] 403 -  295B  - /.htaccess_sc
[11:50:45] 403 -  294B  - /.httr-oauth
[11:50:49] 403 -  293B  - /.htpasswds
[11:50:50] 403 -  297B  - /.htaccess.bak1
[11:51:11] 403 -  288B  - /.php3
[11:51:13] 403 -  287B  - /.php
<span class="gr">[11:51:51] 200 -    0B  - /2.php</span>
<span class="gr">[11:58:16] 200 -    5B  - /flag.txt</span>
[12:02:51] 403 -  296B  - /server-status
[12:02:52] 403 -  297B  - /server-status/</div>
<div class="tl" style="top:762px"><b class="or">Task Completed</b></div>
<div class="tl" style="top:826px">   <span class="bl">(</span><b class="rd">root</b>  <b class="rd">mel0ny</b><span class="bl">)-[</span><b class="wh">/home/mel0ny</b><span class="bl">]</span>
  <b class="rd">#</b></div>
<div class="abs" style="left:26px;top:839px;width:41px;height:2px;background:#3b86f7"></div>
<div class="abs" style="left:26px;top:839px;width:2px;height:33px;background:#3b86f7"></div>
<div class="abs" style="left:26px;top:870px;width:25px;height:2px;background:#3b86f7"></div>
<svg class="abs" style="left:149px;top:828px" width="24" height="24" viewBox="0 0 24 24"><circle cx="12" cy="12" r="10.5" stroke="#ea0a0a" stroke-width="2" fill="none"/><path d="M9 6v12M15 6l-6 6 6 6" stroke="#ea0a0a" stroke-width="2" fill="none"/></svg>
<div class="abs" style="left:83px;top:857px;width:16px;height:30px;background:#fff"></div>
<div class="abs" style="left:1693px;top:531px;width:13px;height:394px;border-radius:6px;background:#4b4d53"></div>
</div>
</body></html>
